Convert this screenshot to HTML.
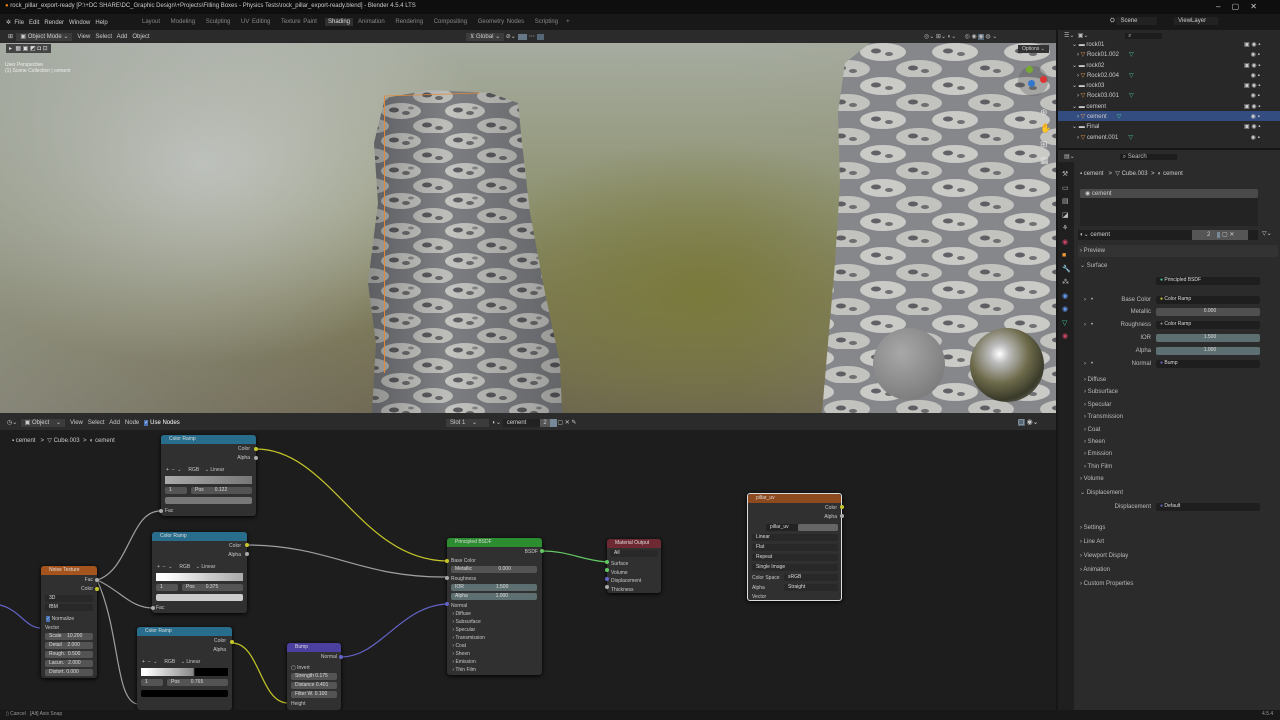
<!DOCTYPE html>
<html><head><meta charset="utf-8"><style>
*{margin:0;padding:0;box-sizing:border-box}
body{width:1280px;height:720px;overflow:hidden;background:#161616;font-family:"Liberation Sans",sans-serif;font-size:6px;color:#c8c8c8;position:relative}
.a{position:absolute}
.t{position:absolute;white-space:nowrap}
.node{position:absolute;background:#303030;border-radius:3px;box-shadow:0 1px 4px #000}
.nh{height:9px;border-radius:3px 3px 0 0;padding-left:8px;font-size:5px;line-height:9px;color:#ddd}
.fld{position:absolute;background:#545454;border-radius:2px;height:7px;font-size:5px;line-height:7px;padding-left:4px;color:#ddd}
.sk{position:absolute;width:4px;height:4px;border-radius:50%}
.row{position:absolute;left:1080px;font-size:6px;color:#bbb}
</style></head><body>
<!-- title bar -->
<div class="a" style="left:0;top:0;width:1280px;height:14px;background:#0e0e0e"></div>
<div class="t" style="left:5px;top:3px;font-size:6px;color:#ccc"><span style="color:#e87d0d">●</span> rock_pillar_export-ready [P:\+DC SHARE\DC_Graphic Design\+Projects\Filling Boxes - Physics Tests\rock_pillar_export-ready.blend] - Blender 4.5.4 LTS</div>
<div class="t" style="left:1216px;top:2px;font-size:8px;color:#ccc">–&nbsp;&nbsp;&nbsp;&nbsp;&nbsp;▢&nbsp;&nbsp;&nbsp;&nbsp;&nbsp;✕</div>
<!-- menu -->
<div class="a" style="left:0;top:14px;width:1280px;height:16px;background:#181818"></div>
<div class="t" style="left:6px;top:19px;color:#ccc">✲&nbsp; File&nbsp;&nbsp; Edit&nbsp;&nbsp; Render&nbsp;&nbsp; Window&nbsp;&nbsp; Help</div>
<div class="t" style="left:142px;top:19px;color:#888;word-spacing:1px">Layout&nbsp;&nbsp;&nbsp; Modeling&nbsp;&nbsp;&nbsp; Sculpting&nbsp;&nbsp;&nbsp; UV Editing&nbsp;&nbsp;&nbsp; Texture Paint&nbsp;&nbsp; <span style="background:#303030;color:#ddd;padding:1px 3px">Shading</span>&nbsp; Animation&nbsp;&nbsp;&nbsp; Rendering&nbsp;&nbsp;&nbsp; Compositing&nbsp;&nbsp;&nbsp; Geometry Nodes&nbsp;&nbsp;&nbsp; Scripting&nbsp;&nbsp; +</div>
<div class="t" style="left:1110px;top:18px;color:#ccc">⛭ <span style="background:#222;padding:1px 20px 1px 4px">Scene</span>&nbsp;&nbsp;&nbsp;&nbsp;&nbsp;&nbsp;&nbsp;&nbsp;&nbsp; <span style="background:#222;padding:1px 12px 1px 4px">ViewLayer</span></div>
<!-- viewport header -->
<div class="a" style="left:0;top:30px;width:1056px;height:13px;background:#2b2b2b"></div>
<div class="t" style="left:8px;top:33px;color:#ccc">⊞ &nbsp;<span style="background:#3c3c3c;padding:1px 4px">▣ Object Mode ⌄</span>&nbsp;&nbsp; View&nbsp;&nbsp; Select&nbsp;&nbsp; Add&nbsp;&nbsp; Object</div>
<div class="t" style="left:466px;top:33px;color:#ccc"><span style="background:#3c3c3c;padding:1px 4px">⊻ Global ⌄</span> ⊘⌄ <span style="background:#678;padding:0 4px">&nbsp;</span> ⋯ <span style="background:#567;padding:0 3px">&nbsp;</span></div>
<!-- viewport -->
<div class="a" style="left:0;top:43px;width:1056px;height:370px;background:
radial-gradient(ellipse 300px 200px at 200px 120px,#c8cbc6 0%,rgba(200,203,198,0) 100%),
radial-gradient(ellipse 250px 150px at 700px 250px,#7a7a3c 0%,rgba(120,120,60,0) 100%),
linear-gradient(180deg,#a6aca0 0%,#8e9270 45%,#7d7a58 70%,#6d6650 100%)"></div>
<div class="a" style="left:0;top:43px;width:1056px;height:370px;background:linear-gradient(90deg,rgba(160,165,160,.5),rgba(0,0,0,0) 40%,rgba(0,0,0,0) 70%,rgba(150,150,140,.3))"></div>
<svg class="a" style="left:0;top:43px" width="1056" height="370">
<defs>
<pattern id="st" width="64" height="30" patternUnits="userSpaceOnUse">
<rect width="64" height="30" fill="#7c7e82"/>
<ellipse cx="17" cy="8" rx="20" ry="8" fill="#c4c4c1"/>
<ellipse cx="10" cy="7" rx="5" ry="2.5" fill="#5e5e62"/><ellipse cx="22" cy="10" rx="4" ry="2" fill="#6d6d70"/><ellipse cx="27" cy="5" rx="3" ry="1.5" fill="#88888a"/>
<ellipse cx="49" cy="23" rx="20" ry="8" fill="#bdbdba"/>
<ellipse cx="43" cy="22" rx="5" ry="2.5" fill="#5a5a5e"/><ellipse cx="55" cy="25" rx="4" ry="2" fill="#69696c"/>
<ellipse cx="-15" cy="23" rx="20" ry="8" fill="#bdbdba"/><ellipse cx="81" cy="8" rx="20" ry="8" fill="#c4c4c1"/>
</pattern>
<pattern id="st2" width="72" height="34" patternUnits="userSpaceOnUse">
<rect width="72" height="34" fill="#85878b"/>
<ellipse cx="19" cy="9" rx="23" ry="9" fill="#cacac7"/>
<ellipse cx="12" cy="8" rx="5" ry="2.5" fill="#626266"/><ellipse cx="25" cy="11" rx="4" ry="2" fill="#717174"/>
<ellipse cx="55" cy="26" rx="23" ry="9" fill="#c2c2bf"/>
<ellipse cx="49" cy="25" rx="5" ry="2.5" fill="#5f5f63"/><ellipse cx="61" cy="28" rx="4" ry="2" fill="#6e6e71"/>
<ellipse cx="-17" cy="26" rx="23" ry="9" fill="#c2c2bf"/><ellipse cx="91" cy="9" rx="23" ry="9" fill="#cacac7"/>
</pattern>
<linearGradient id="sh" x1="0" x2="1"><stop offset="0" stop-color="#000" stop-opacity=".25"/><stop offset=".4" stop-color="#000" stop-opacity="0"/><stop offset="1" stop-color="#000" stop-opacity=".2"/></linearGradient>
</defs>
<path d="M385 55 L430 47 L490 50 L518 60 L522 100 L530 170 L545 250 L560 320 L562 370 L372 370 L376 300 L368 240 L378 160 L374 100 Z" fill="url(#st)"/>
<path d="M385 55 L430 47 L490 50 L518 60 L522 100 L530 170 L545 250 L560 320 L562 370 L372 370 L376 300 L368 240 L378 160 L374 100 Z" fill="url(#sh)"/>
<path d="M845 20 L870 0 L1056 0 L1056 370 L822 370 L828 300 L835 220 L840 140 L838 70 Z" fill="url(#st2)"/>
<line x1="384.5" y1="53" x2="384.5" y2="330" stroke="#e08a3a" stroke-width="1"/>
<line x1="385" y1="53" x2="480" y2="50" stroke="#e08a3a" stroke-width="0.8"/>
</svg>
<div class="a" style="left:873px;top:328px;width:72px;height:72px;border-radius:50%;background:radial-gradient(circle at 40% 35%,#a8a8a8,#6f6f6f)"></div>
<div class="a" style="left:970px;top:328px;width:74px;height:74px;border-radius:50%;background:radial-gradient(circle at 40% 35%,#fff 0,#bbb 15%,#6d6a4a 45%,#3a3a2a 70%,#999 100%)"></div>
<div class="t" style="left:5px;top:62px;color:#eee;font-size:5px">User Perspective<br>(1) Scene Collection | cement</div>
<div class="t" style="left:6px;top:44px;background:#444;padding:1px 3px;color:#ddd">▸ &nbsp;▦ ▣ ◩ ◘ ⊡</div>
<div class="t" style="left:1018px;top:45px;background:#333;padding:1px 4px;color:#ccc;font-size:5px">Options ⌄</div>
<div class="a" style="left:1018px;top:66px;width:30px;height:30px;border-radius:50%;background:rgba(80,80,80,.3)"></div>
<div class="sk" style="left:1040px;top:76px;width:7px;height:7px;background:#d33"></div>
<div class="sk" style="left:1026px;top:66px;width:7px;height:7px;background:#7a3"></div>
<div class="sk" style="left:1028px;top:80px;width:7px;height:7px;background:#37c"></div>
<div class="t" style="left:1040px;top:104px;color:#ddd;font-size:9px;line-height:16px">⊕<br>✋<br>⊞<br>▦</div>
<div class="t" style="left:924px;top:33px;color:#bbb">◎⌄ ⊞⌄ ◐⌄ &nbsp;&nbsp;&nbsp; ◎ ◉ <span style="background:#567">◉</span> ◍ ⌄</div>
<!-- node editor header -->
<div class="a" style="left:0;top:413px;width:1056px;height:17px;background:#2b2b2b"></div>
<div class="t" style="left:7px;top:419px;color:#ccc">◷⌄ &nbsp;<span style="background:#3c3c3c;padding:1px 4px">▣ Object&nbsp;&nbsp;&nbsp; ⌄</span>&nbsp;&nbsp; View&nbsp;&nbsp; Select&nbsp;&nbsp; Add&nbsp;&nbsp; Node&nbsp;&nbsp; <span style="color:#fff"><span style="background:#4772b3;font-size:5px">✓</span> Use Nodes</span></div>
<div class="t" style="left:446px;top:419px;color:#ccc"><span style="background:#3c3c3c;padding:1px 12px 1px 4px">Slot 1&nbsp;&nbsp;&nbsp; ⌄</span>&nbsp; ◐⌄ <span style="background:#222;padding:1px 14px 1px 4px">cement</span><span style="background:#555;padding:1px 3px">2</span><span style="background:#789;padding:1px 3px"> </span> ▢ ✕ ✎</div>
<div class="t" style="left:1018px;top:418px;color:#ccc;font-size:7px"><span style="background:#567">▢</span> ◉⌄</div>
<!-- node area -->
<div class="a" style="left:0;top:430px;width:1056px;height:280px;background:#1d1d1d"></div>
<div class="t" style="left:12px;top:437px;color:#ccc">▪ cement &nbsp;&nbsp;&gt;&nbsp; ▽ Cube.003 &nbsp;&gt;&nbsp; ◐ cement</div>
<svg class="a" style="left:0;top:430px" width="1056" height="280" fill="none" stroke-width="1.2">
<path d="M256 19 C330 19 360 130 447 131" stroke="#c7c729"/>
<path d="M246 115 C330 115 360 148 447 147" stroke="#a0a0a0"/>
<path d="M97 150 C130 140 130 80 161 81" stroke="#a0a0a0"/>
<path d="M97 150 C120 160 130 178 153 178" stroke="#a0a0a0"/>
<path d="M97 150 C120 200 115 270 137 274" stroke="#a0a0a0"/>
<path d="M232 213 C260 213 260 273 288 273" stroke="#c7c729"/>
<path d="M341 227 C380 227 400 176 447 174" stroke="#6363c7"/>
<path d="M0 175 C20 180 25 197 40 198" stroke="#6363c7"/>
<path d="M541 121 C570 121 580 130 607 132" stroke="#63c763"/>
</svg>
<!-- Color ramp 1 -->
<div class="node" style="left:161px;top:435px;width:95px;height:81px"><div class="nh" style="background:#286e8c">Color Ramp</div>
<div class="t" style="right:6px;top:11px;font-size:5px">Color</div><div class="t" style="right:6px;top:20px;font-size:5px">Alpha</div>
<div class="t" style="left:5px;top:32px;font-size:5px">+&nbsp; –&nbsp; ⌄&nbsp;&nbsp;&nbsp;&nbsp; RGB&nbsp;&nbsp;&nbsp; ⌄ Linear</div>
<div class="a" style="left:4px;top:41px;width:87px;height:8px;background:linear-gradient(90deg,#aaa,#777)"></div>
<div class="fld" style="left:4px;top:52px;width:22px">1</div><div class="fld" style="left:30px;top:52px;width:61px">Pos&nbsp;&nbsp;&nbsp;&nbsp;&nbsp;&nbsp;&nbsp; 0.122</div>
<div class="fld" style="left:4px;top:62px;width:87px;background:#777"></div>
<div class="t" style="left:4px;top:73px;font-size:5px">Fac</div></div>
<!-- Color ramp 2 -->
<div class="node" style="left:152px;top:532px;width:95px;height:81px"><div class="nh" style="background:#286e8c">Color Ramp</div>
<div class="t" style="right:6px;top:11px;font-size:5px">Color</div><div class="t" style="right:6px;top:20px;font-size:5px">Alpha</div>
<div class="t" style="left:5px;top:32px;font-size:5px">+&nbsp; –&nbsp; ⌄&nbsp;&nbsp;&nbsp;&nbsp; RGB&nbsp;&nbsp;&nbsp; ⌄ Linear</div>
<div class="a" style="left:4px;top:41px;width:87px;height:8px;background:linear-gradient(90deg,#fff 10%,#ccc 60%,#aaa)"></div>
<div class="fld" style="left:4px;top:52px;width:22px">1</div><div class="fld" style="left:30px;top:52px;width:61px">Pos&nbsp;&nbsp;&nbsp;&nbsp;&nbsp;&nbsp;&nbsp; 0.375</div>
<div class="fld" style="left:4px;top:62px;width:87px;background:#ccc"></div>
<div class="t" style="left:4px;top:73px;font-size:5px">Fac</div></div>
<!-- Color ramp 3 -->
<div class="node" style="left:137px;top:627px;width:95px;height:83px"><div class="nh" style="background:#286e8c">Color Ramp</div>
<div class="t" style="right:6px;top:11px;font-size:5px">Color</div><div class="t" style="right:6px;top:20px;font-size:5px">Alpha</div>
<div class="t" style="left:5px;top:32px;font-size:5px">+&nbsp; –&nbsp; ⌄&nbsp;&nbsp;&nbsp;&nbsp; RGB&nbsp;&nbsp;&nbsp; ⌄ Linear</div>
<div class="a" style="left:4px;top:41px;width:87px;height:8px;background:linear-gradient(90deg,#fff 5%,#888 60%,#000 62%)"></div>
<div class="fld" style="left:4px;top:52px;width:22px">1</div><div class="fld" style="left:30px;top:52px;width:61px">Pos&nbsp;&nbsp;&nbsp;&nbsp;&nbsp;&nbsp;&nbsp; 0.765</div>
<div class="fld" style="left:4px;top:63px;width:87px;background:#000"></div></div>
<!-- Noise texture -->
<div class="node" style="left:41px;top:566px;width:56px;height:112px"><div class="nh" style="background:#a5541e">Noise Texture</div>
<div class="t" style="right:4px;top:11px;font-size:5px">Fac</div><div class="t" style="right:4px;top:20px;font-size:5px">Color</div>
<div class="fld" style="left:4px;top:29px;width:48px;background:#282828">3D</div>
<div class="fld" style="left:4px;top:38px;width:48px;background:#282828">fBM</div>
<div class="t" style="left:5px;top:50px;font-size:5px"><span style="background:#4772b3">✓</span> Normalize</div>
<div class="t" style="left:4px;top:59px;font-size:5px">Vector</div>
<div class="fld" style="left:4px;top:67px;width:48px">Scale&nbsp;&nbsp;&nbsp; 10.200</div>
<div class="fld" style="left:4px;top:76px;width:48px">Detail&nbsp;&nbsp;&nbsp; 2.000</div>
<div class="fld" style="left:4px;top:85px;width:48px">Rough.&nbsp; 0.500</div>
<div class="fld" style="left:4px;top:94px;width:48px">Lacun.&nbsp;&nbsp; 2.000</div>
<div class="fld" style="left:4px;top:103px;width:48px">Distort. 0.000</div></div>
<!-- Bump -->
<div class="node" style="left:287px;top:643px;width:54px;height:67px"><div class="nh" style="background:#4b3fa0">Bump</div>
<div class="t" style="right:4px;top:11px;font-size:5px">Normal</div>
<div class="t" style="left:4px;top:22px;font-size:5px">▢ Invert</div>
<div class="fld" style="left:4px;top:30px;width:46px">Strength 0.175</div>
<div class="fld" style="left:4px;top:39px;width:46px">Distance 0.401</div>
<div class="fld" style="left:4px;top:48px;width:46px">Filter W. 0.100</div>
<div class="t" style="left:4px;top:58px;font-size:5px">Height</div></div>
<!-- Principled -->
<div class="node" style="left:447px;top:538px;width:95px;height:137px"><div class="nh" style="background:#2c8c30">Principled BSDF</div>
<div class="t" style="right:4px;top:11px;font-size:5px">BSDF</div>
<div class="t" style="left:4px;top:20px;font-size:5px">Base Color</div>
<div class="fld" style="left:4px;top:28px;width:86px">Metallic&nbsp;&nbsp;&nbsp;&nbsp;&nbsp;&nbsp;&nbsp;&nbsp;&nbsp;&nbsp;&nbsp;&nbsp;&nbsp;&nbsp;&nbsp;&nbsp;&nbsp;&nbsp; 0.000</div>
<div class="t" style="left:4px;top:38px;font-size:5px">Roughness</div>
<div class="fld" style="left:4px;top:46px;width:86px;background:#5d6f70">IOR&nbsp;&nbsp;&nbsp;&nbsp;&nbsp;&nbsp;&nbsp;&nbsp;&nbsp;&nbsp;&nbsp;&nbsp;&nbsp;&nbsp;&nbsp;&nbsp;&nbsp;&nbsp;&nbsp;&nbsp;&nbsp;&nbsp; 1.500</div>
<div class="fld" style="left:4px;top:55px;width:86px;background:#5d6f70">Alpha&nbsp;&nbsp;&nbsp;&nbsp;&nbsp;&nbsp;&nbsp;&nbsp;&nbsp;&nbsp;&nbsp;&nbsp;&nbsp;&nbsp;&nbsp;&nbsp;&nbsp;&nbsp;&nbsp; 1.000</div>
<div class="t" style="left:4px;top:64px;font-size:5px;line-height:8px">Normal<br>&nbsp;› Diffuse<br>&nbsp;› Subsurface<br>&nbsp;› Specular<br>&nbsp;› Transmission<br>&nbsp;› Coat<br>&nbsp;› Sheen<br>&nbsp;› Emission<br>&nbsp;› Thin Film</div></div>
<!-- Material output -->
<div class="node" style="left:607px;top:539px;width:54px;height:54px"><div class="nh" style="background:#6e2a32">Material Output</div>
<div class="fld" style="left:3px;top:11px;width:48px;background:#282828">All</div>
<div class="t" style="left:4px;top:21px;font-size:5px;line-height:8.5px">Surface<br>Volume<br>Displacement<br>Thickness</div></div>
<!-- Image texture -->
<div class="node" style="left:747px;top:493px;width:95px;height:108px;border:1px solid #ddd"><div class="nh" style="background:#8c4a1e">pillar_uv</div>
<div class="t" style="right:4px;top:11px;font-size:5px">Color</div><div class="t" style="right:4px;top:20px;font-size:5px">Alpha</div>
<div class="fld" style="left:18px;top:30px;width:32px;background:#222">pillar_uv</div>
<div class="fld" style="left:50px;top:30px;width:40px;background:#666"></div>
<div class="fld" style="left:4px;top:40px;width:86px;background:#282828">Linear</div>
<div class="fld" style="left:4px;top:50px;width:86px;background:#282828">Flat</div>
<div class="fld" style="left:4px;top:60px;width:86px;background:#282828">Repeat</div>
<div class="fld" style="left:4px;top:70px;width:86px;background:#282828">Single Image</div>
<div class="t" style="left:4px;top:81px;font-size:5px">Color Space</div><div class="fld" style="left:36px;top:80px;width:54px;background:#282828">sRGB</div>
<div class="t" style="left:4px;top:91px;font-size:5px">Alpha</div><div class="fld" style="left:36px;top:90px;width:54px;background:#282828">Straight</div>
<div class="t" style="left:4px;top:100px;font-size:5px">Vector</div></div>
<!-- sockets -->
<div class="sk" style="left:254px;top:447px;background:#c7c729"></div><div class="sk" style="left:254px;top:456px;background:#aaa"></div>
<div class="sk" style="left:159px;top:509px;background:#aaa"></div>
<div class="sk" style="left:245px;top:543px;background:#c7c729"></div><div class="sk" style="left:245px;top:552px;background:#aaa"></div>
<div class="sk" style="left:151px;top:606px;background:#aaa"></div>
<div class="sk" style="left:95px;top:578px;background:#aaa"></div><div class="sk" style="left:95px;top:587px;background:#c7c729"></div>
<div class="sk" style="left:230px;top:640px;background:#c7c729"></div>
<div class="sk" style="left:339px;top:655px;background:#6363c7"></div>
<div class="sk" style="left:445px;top:559px;background:#c7c729"></div><div class="sk" style="left:445px;top:576px;background:#aaa"></div><div class="sk" style="left:445px;top:602px;background:#6363c7"></div>
<div class="sk" style="left:540px;top:549px;background:#63c763"></div>
<div class="sk" style="left:605px;top:560px;background:#63c763"></div><div class="sk" style="left:605px;top:568px;background:#63c763"></div><div class="sk" style="left:605px;top:577px;background:#6363c7"></div><div class="sk" style="left:605px;top:585px;background:#aaa"></div>
<div class="sk" style="left:840px;top:505px;background:#c7c729"></div><div class="sk" style="left:840px;top:514px;background:#aaa"></div>
<!-- status bar -->
<div class="a" style="left:0;top:710px;width:1280px;height:10px;background:#181818"></div>
<div class="t" style="left:6px;top:711px;color:#999;font-size:5px">▯ Cancel&nbsp;&nbsp; [Alt] Axis Snap</div>
<div class="t" style="left:1262px;top:711px;color:#999;font-size:5px">4.5.4</div>
<!-- outliner -->
<div class="a" style="left:1058px;top:30px;width:222px;height:118px;background:#282828"></div>
<div class="t" style="left:1064px;top:32px;color:#bbb">☰⌄ &nbsp;▣⌄ &nbsp;&nbsp;&nbsp;&nbsp;&nbsp;&nbsp;&nbsp;&nbsp;&nbsp;&nbsp;&nbsp;&nbsp;&nbsp;&nbsp;&nbsp;&nbsp;&nbsp;&nbsp;&nbsp;&nbsp; <span style="background:#1d1d1d;padding:0 30px 0 3px">⌕</span></div>
<div class="a" style="left:1058px;top:111px;width:222px;height:10px;background:#334d80"></div>
<div class="t" style="left:1072px;top:40px;color:#ccc;line-height:10.3px;font-size:6px">⌄ ▬ rock01<br>&nbsp;&nbsp;&nbsp;› <span style="color:#e89a4a">▽</span> Rock01.002 &nbsp;&nbsp;&nbsp;&nbsp; <span style="color:#4c9">▽</span><br>⌄ ▬ rock02<br>&nbsp;&nbsp;&nbsp;› <span style="color:#e89a4a">▽</span> Rock02.004 &nbsp;&nbsp;&nbsp;&nbsp; <span style="color:#4c9">▽</span><br>⌄ ▬ rock03<br>&nbsp;&nbsp;&nbsp;› <span style="color:#e89a4a">▽</span> Rock03.001 &nbsp;&nbsp;&nbsp;&nbsp; <span style="color:#4c9">▽</span><br>⌄ ▬ cement<br>&nbsp;&nbsp;&nbsp;› <span style="color:#e89a4a">▽</span> cement &nbsp;&nbsp;&nbsp;&nbsp; <span style="color:#4c9">▽</span><br>⌄ ▬ Final<br>&nbsp;&nbsp;&nbsp;› <span style="color:#e89a4a">▽</span> cement.001 &nbsp;&nbsp;&nbsp;&nbsp; <span style="color:#4c9">▽</span></div>
<div class="t" style="left:1244px;top:40px;color:#ccc;line-height:10.3px;font-size:6px">▣ ◉ ▪<br>&nbsp;&nbsp;&nbsp; ◉ ▪<br>▣ ◉ ▪<br>&nbsp;&nbsp;&nbsp; ◉ ▪<br>▣ ◉ ▪<br>&nbsp;&nbsp;&nbsp; ◉ ▪<br>▣ ◉ ▪<br>&nbsp;&nbsp;&nbsp; ◉ ▪<br>▣ ◉ ▪<br>&nbsp;&nbsp;&nbsp; ◉ ▪</div>
<!-- properties -->
<div class="a" style="left:1058px;top:150px;width:222px;height:560px;background:#2b2b2b"></div>
<div class="a" style="left:1058px;top:162px;width:16px;height:548px;background:#1f1f1f"></div>
<div class="t" style="left:1062px;top:168px;color:#bbb;font-size:7px;line-height:13.5px">⚒<br>▭<br>▤<br>◪<br>⚘<br><span style="color:#c46">◉</span><br><span style="color:#e93">■</span><br><span style="color:#69e">🔧</span><br>⁂<br><span style="color:#69e">◉</span><br><span style="color:#69e">◉</span><br><span style="color:#4c9">▽</span><br><span style="color:#c46">◉</span></div>
<div class="t" style="left:1064px;top:153px;color:#bbb">▤⌄ &nbsp;&nbsp;&nbsp;&nbsp;&nbsp;&nbsp;&nbsp;&nbsp;&nbsp;&nbsp;&nbsp;&nbsp;&nbsp;&nbsp;&nbsp;&nbsp;&nbsp;&nbsp;&nbsp;&nbsp;&nbsp;&nbsp;&nbsp;&nbsp;&nbsp; <span style="background:#1d1d1d;padding:0 30px 0 3px">⌕ Search</span></div>
<div class="t" style="left:1080px;top:170px;color:#ccc">▪ cement &nbsp;&nbsp;&gt;&nbsp; ▽ Cube.003 &nbsp;&gt;&nbsp; ◐ cement</div>
<div class="a" style="left:1080px;top:189px;width:178px;height:9px;background:#4a4a4a;border-radius:2px"></div>
<div class="t" style="left:1085px;top:190px;color:#ccc">◉ cement</div>
<div class="a" style="left:1080px;top:198px;width:178px;height:28px;background:#232323"></div>
<div class="a" style="left:1078px;top:230px;width:180px;height:10px;background:#1e1e1e"></div>
<div class="t" style="left:1080px;top:231px;color:#ccc">◐⌄ cement</div>
<div class="a" style="left:1192px;top:230px;width:56px;height:10px;background:#555"></div>
<div class="t" style="left:1207px;top:231px;color:#ccc">2 &nbsp;&nbsp;&nbsp;<span style="background:#789">&nbsp;&nbsp;</span> ▢ ✕</div>
<div class="t" style="left:1262px;top:230px;color:#ccc">▽⌄</div>
<div class="a" style="left:1078px;top:245px;width:200px;height:12px;background:#333"></div>
<div class="row" style="top:248px">› Preview</div>
<div class="row" style="top:262px">⌄ Surface</div>
<div class="t" style="left:1129px;top:278px;color:#bbb;text-align:right;width:50px">Surface</div>
<div class="fld" style="left:1156px;top:277px;width:104px;height:8px;background:#1e1e1e"><span style="color:#4c9">●</span> Principled BSDF</div>
<div class="t" style="left:1084px;top:297px;color:#bbb">›&nbsp;&nbsp; •</div>
<div class="t" style="left:1101px;top:297px;color:#bbb;text-align:right;width:50px">Base Color</div>
<div class="fld" style="left:1156px;top:296px;width:104px;height:8px;background:#1e1e1e"><span style="color:#cc3">●</span> Color Ramp</div>
<div class="t" style="left:1101px;top:309px;color:#bbb;text-align:right;width:50px">Metallic</div>
<div class="fld" style="left:1156px;top:308px;width:104px;height:8px;background:#505050;text-align:center">0.000</div>
<div class="t" style="left:1084px;top:322px;color:#bbb">›&nbsp;&nbsp; •</div>
<div class="t" style="left:1101px;top:322px;color:#bbb;text-align:right;width:50px">Roughness</div>
<div class="fld" style="left:1156px;top:321px;width:104px;height:8px;background:#1e1e1e"><span style="color:#888">●</span> Color Ramp</div>
<div class="t" style="left:1101px;top:335px;color:#bbb;text-align:right;width:50px">IOR</div>
<div class="fld" style="left:1156px;top:334px;width:104px;height:8px;background:#5d6f70;text-align:center">1.500</div>
<div class="t" style="left:1101px;top:348px;color:#bbb;text-align:right;width:50px">Alpha</div>
<div class="fld" style="left:1156px;top:347px;width:104px;height:8px;background:#5d6f70;text-align:center">1.000</div>
<div class="t" style="left:1084px;top:361px;color:#bbb">›&nbsp;&nbsp; •</div>
<div class="t" style="left:1101px;top:361px;color:#bbb;text-align:right;width:50px">Normal</div>
<div class="fld" style="left:1156px;top:360px;width:104px;height:8px;background:#1e1e1e"><span style="color:#66c">●</span> Bump</div>
<div class="row" style="top:374px;left:1084px;line-height:12.4px">› Diffuse<br>› Subsurface<br>› Specular<br>› Transmission<br>› Coat<br>› Sheen<br>› Emission<br>› Thin Film</div>
<div class="row" style="top:476px">› Volume</div>
<div class="row" style="top:489px">⌄ Displacement</div>
<div class="t" style="left:1101px;top:504px;color:#bbb;text-align:right;width:50px">Displacement</div>
<div class="fld" style="left:1156px;top:503px;width:104px;height:8px;background:#1e1e1e"><span style="color:#66c">●</span> Default</div>
<div class="row" style="top:521px;line-height:14px">› Settings<br>› Line Art<br>› Viewport Display<br>› Animation<br>› Custom Properties</div>
</body></html>
